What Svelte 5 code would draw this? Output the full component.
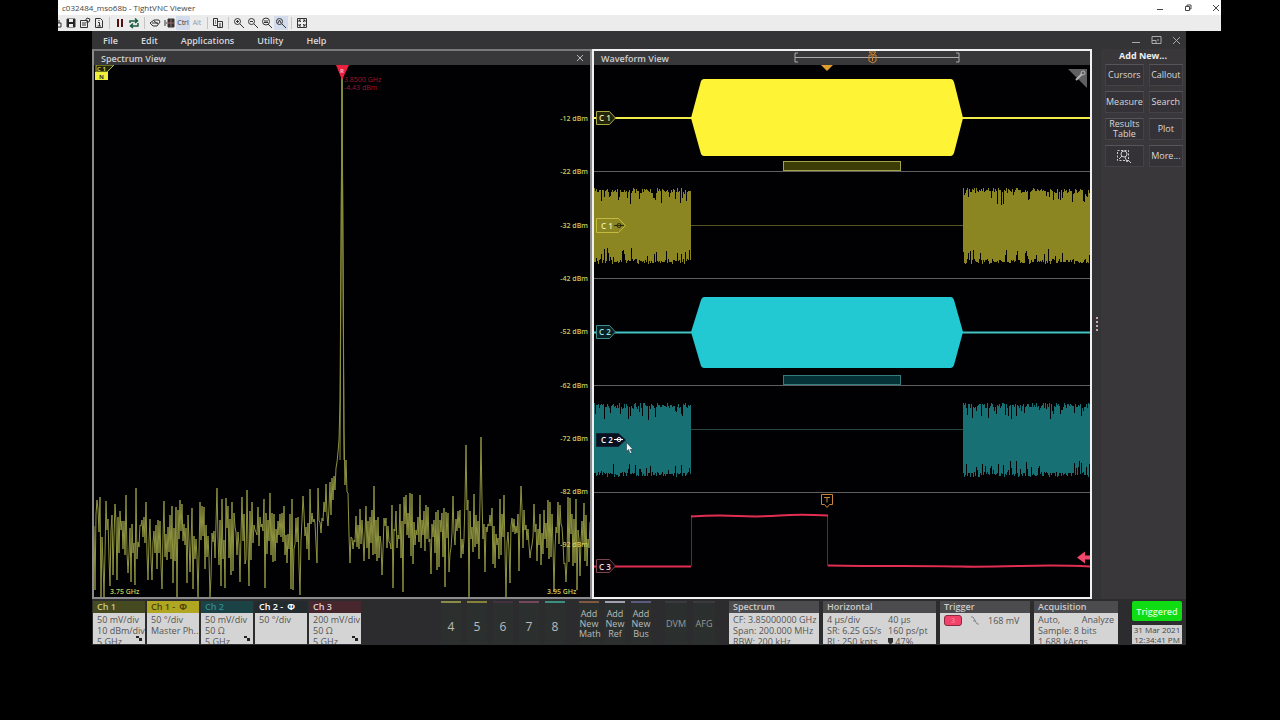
<svelte:options runes={true} />

<script>
  const menus = ["File", "Edit", "Applications", "Utility", "Help"];

  const channels = [
    { name: "Ch 1", kind: "ch1", lines: ["50 mV/div", "10 dBm/div", "5 GHz"], probe: true },
    { name: "Ch 1 -", phase: true, kind: "ch1p", lines: ["50 °/div", "Master Ph..."] },
    { name: "Ch 2", kind: "ch2", lines: ["50 mV/div", "50 Ω", "5 GHz"], probe: true },
    { name: "Ch 2 -", phase: true, kind: "ch2p", lines: ["50 °/div"] },
    { name: "Ch 3", kind: "ch3", lines: ["200 mV/div", "50 Ω", "5 GHz"], probe: true },
  ];

  const inactive = [
    { n: 4, kind: "olive" },
    { n: 5, kind: "gold" },
    { n: 6, kind: "plum" },
    { n: 7, kind: "rose" },
    { n: 8, kind: "teal" },
  ];

  const addNew = [
    { label: "Math", kind: "brown" },
    { label: "Ref", kind: "silver" },
    { label: "Bus", kind: "violet" },
  ];

  const levels = [-12, -22, -32, -42, -52, -62, -72, -82, -92];

  // small seeded generator, so the noise looks the same on every load
  function noise(seed) {
    let s = seed;
    return () => {
      s = (s * 16807) % 2147483647;
      return s / 2147483647;
    };
  }

  const spurs = {
    95: 590, 97: 500, 101: 597, 104: 597, 110: 586, 117: 580, 136: 488, 135: 585, 115: 504, 128: 573,
    148: 580, 152: 580, 162: 589, 164: 501, 177: 597, 180: 500, 190: 572, 193: 589, 198: 597,
    202: 506, 210: 597, 217: 488, 221: 586, 225: 588, 226: 498, 240: 582, 247: 490, 249: 586,
    265: 588, 270: 493, 291: 589, 292: 499, 293: 590, 300: 595, 303: 496, 310: 489, 350: 563,
    374: 486, 382: 575, 393: 588, 403: 592, 404: 497, 412: 494, 431: 574, 445: 587, 453: 496,
    465: 500, 466: 445, 467: 510, 469: 597, 480: 500, 481: 437, 482: 500, 495: 568, 506: 597,
    510: 583, 519: 571, 521: 486, 548: 500, 554: 592, 566: 582, 570: 498, 580: 576, 587: 566,
  };

  // skirt of the carrier
  const skirt = {
    326: 484, 328: 526, 330: 482, 331: 515, 332: 478, 333: 500, 334: 476, 335: 490, 336: 468,
    337: 462, 338: 452, 339: 440, 340: 400, 341: 250, 342: 76, 343: 250, 344: 430, 345: 485,
    346: 460, 347: 492, 348: 493, 349: 535,
  };

  function spectrumTrace() {
    const rnd = noise(7331);
    const pts = [];
    for (let x = 94; x <= 590; x++) {
      let mid = 533;
      if (x > 290 && x < 341) mid = 533 - ((x - 290) * (x - 290)) / 48;
      const amp = x > 318 && x < 350 ? 36 : 52;
      let y = mid + (x % 2 ? 1 : -1) * rnd() * amp * 0.55 + (rnd() - 0.5) * 26;
      if (rnd() > 0.94) y += 24;
      if (spurs[x]) y = spurs[x];
      if (skirt[x]) y = skirt[x];
      pts.push(`${x},${Math.round(y)}`);
    }
    return pts.join(" ");
  }

  function burst(x0, x1, top, bottom, seed) {
    const rnd = noise(seed);
    const up = [];
    const down = [];
    for (let x = x0; x <= x1; x++) {
      let a = rnd() * 5;
      let b = rnd() * 5;
      if (rnd() > 0.8) a += rnd() * 12;
      if (rnd() > 0.8) b += rnd() * 12;
      if (rnd() > 0.98) a += 12;
      if (rnd() > 0.98) b += 12;
      up.push(`${x},${Math.round(top + a)} ${x + 1},${Math.round(top + a)}`);
      down.unshift(`${x + 1},${Math.round(bottom - b)} ${x},${Math.round(bottom - b)}`);
    }
    return up.concat(down).join(" ");
  }

  const spectrum = spectrumTrace();
  const bursts = [
    { kind: "c1p", points: burst(594, 690, 188, 264, 11) },
    { kind: "c1p", points: burst(963, 1089, 188, 264, 523) },
    { kind: "c2p", points: burst(594, 690, 403, 477, 97) },
    { kind: "c2p", points: burst(963, 1089, 403, 477, 881) },
  ];
</script>

<div class="viewer">
  <header class="titlebar">
    <span class="titlebar__name">c032484_mso68b - TightVNC Viewer</span>
    <div class="titlebar__buttons">
      <button aria-label="Minimize window"><svg viewBox="0 0 10 10"><path d="M2 6.500h6" /></svg></button>
      <button aria-label="Restore window"><svg viewBox="0 0 10 10"><path d="M2.500 3.500h4v4h-4zM4 3.500V2h4v4H6.500" /></svg></button>
      <button aria-label="Close window"><svg viewBox="0 0 10 10"><path d="M2 2l6 6M8 2l-6 6" /></svg></button>
    </div>
  </header>

  <div class="toolbar">
    <button class="tool tool--cut" aria-label="New connection"><svg viewBox="0 0 12 12"><path d="M8 3v3M5 6h5v4H5z" /></svg></button>
    <button class="tool" aria-label="Save session"><svg viewBox="0 0 12 12"><path d="M2 2h8v8H2z" fill="#222" /><path d="M4 2h4v3H4zM4 7h4v3H4z" fill="#eee" stroke="none" /></svg></button>
    <button class="tool" aria-label="Connection options"><svg viewBox="0 0 12 12"><path d="M1.500 3.500h7v7h-7zM3 6h4M3 8h4M6 4l2-3 3 1-1 3H7" /></svg></button>
    <button class="tool" aria-label="Connection info"><svg viewBox="0 0 12 12"><path d="M2.500 1.500h5l2 2v7h-7zM6 3v1M5 5.500h1.500V9M4.500 9h3.500" /></svg></button>
    <i></i>
    <button class="tool" aria-label="Pause"><svg viewBox="0 0 12 12"><path d="M4 2v8M8 2v8" stroke="#511" stroke-width="2" /></svg></button>
    <button class="tool" aria-label="Refresh"><svg viewBox="0 0 12 12"><path d="M2 6V4h7M7 1.500L9.500 4 7 6M10 6v3H3M5 6.500L2.500 9 5 11" stroke="#175c40" stroke-width="1.500" /></svg></button>
    <i></i>
    <button class="tool" aria-label="Ctrl Alt Del"><svg viewBox="0 0 12 12"><path d="M1 6l4-3h5l1 2-3 4H4zM3 6h6M5 4l4 3" /></svg></button>
    <button class="tool" aria-label="Ctrl Esc"><svg viewBox="0 0 12 12"><path d="M5 2h6v8H5z" fill="#333" /><path d="M8 2v8M5 6h6" stroke="#966" /><path d="M1 4h2M1 6h3M1 8h2" /></svg></button>
    <button class="tool tool--key tool--on">Ctrl</button>
    <button class="tool tool--key tool--off">Alt</button>
    <i></i>
    <button class="tool" aria-label="Transfer files"><svg viewBox="0 0 12 12"><path d="M1.500 1.500h4v7h-4zM5.500 4.500h5v6h-5zM3 4h1M3 6h1M7 7h2M7 9h2" /></svg></button>
    <i></i>
    <button class="tool" aria-label="Zoom in"><svg viewBox="0 0 12 12"><circle cx="4.500" cy="4.500" r="3" /><path d="M7 7l4 4M3 4.500h3M4.500 3v3" /></svg></button>
    <button class="tool" aria-label="Zoom out"><svg viewBox="0 0 12 12"><circle cx="4.500" cy="4.500" r="3" /><path d="M7 7l4 4M3 4.500h3" /></svg></button>
    <button class="tool" aria-label="Zoom 100%"><svg viewBox="0 0 12 12"><circle cx="5" cy="4.500" r="3.500" /><path d="M7 7l4 4M3 4h4M3 5.500h4" /></svg></button>
    <button class="tool tool--on" aria-label="Zoom auto"><svg viewBox="0 0 12 12"><circle cx="4.500" cy="4.500" r="3" /><path d="M7 7l4 4M3 6l1.500-3L6 6" /></svg></button>
    <i></i>
    <button class="tool" aria-label="Full screen"><svg viewBox="0 0 12 12"><path d="M1.500 1.500h9v9h-9zM3 3l2 2M9 3L7 5M3 9l2-2M9 9L7 7M3 5V3h2M7 3h2v2M3 7v2h2M7 9h2V7" /></svg></button>
  </div>

  <div class="scope">
    <nav class="menu">
      {#each menus as item}
        <button>{item}</button>
      {/each}
      <div class="menu__window">
        <button aria-label="Minimize"><svg viewBox="0 0 12 12"><path d="M2 8.500h8" /></svg></button>
        <button aria-label="Resize"><svg viewBox="0 0 12 12"><path d="M2 2.500h9v7H2zM2 6.500h4v3M7 6h2" /></svg></button>
        <button aria-label="Close"><svg viewBox="0 0 12 12"><path d="M3 3l7 7M10 3l-7 7" /></svg></button>
      </div>
    </nav>

    <div class="main">
      <section class="view">
        <h2 class="view__head">
          Spectrum View
          <button class="view__close" aria-label="Close Spectrum View"><svg viewBox="0 0 10 10"><path d="M2 2l6 6M8 2l-6 6" /></svg></button>
        </h2>
        <svg class="plot" viewBox="94 65 496 532">
          <polyline class="trace" points={spectrum} />
          <path class="carrier" d="M340 460L342 78L344 460" />
          <g class="axis">
            {#each levels as level, i}
              <text x="588" y={121 + Math.round(i * 53.300)} text-anchor="end">{level} dBm</text>
            {/each}
            <text x="110" y="594">3.75 GHz</text>
            <text x="547" y="594">3.95 GHz</text>
          </g>
          <path d="M96 65h18l-7 7h-11z" fill="#22240a" stroke="#b5b838" />
          <text class="tiny" x="97" y="71" fill="#c9cc50">C 1</text>
          <rect x="95" y="72" width="13" height="8" fill="#eef03c" />
          <text class="tiny" x="99" y="79" fill="#333">N</text>
          <path d="M336 65h13l-7 15z" fill="#e8223f" />
          <text class="tiny" x="340" y="73" fill="#ffb0b8">R</text>
          <g class="readout">
            <text x="344" y="82">3.8500 GHz</text>
            <text x="344" y="90">-4.43 dBm</text>
          </g>
        </svg>
      </section>

      <section class="view view--active">
        <h2 class="view__head">
          Waveform View
          <svg class="pan" viewBox="0 0 166 14">
            <path d="M4 2H1v9h3M162 2h3v9h-3M1 6.500h164" />
            <path class="pan__mark" d="M75 1h7l-3 3zM75 4h7v6l-3 2-4-2zM77 6h3M78.500 6v4" />
          </svg>
        </h2>
        <svg class="plot" viewBox="594 65 496 532">
          <g class="divider">
            <path d="M594 171.500h496M594 278.500h496M594 385.500h496M594 492.500h496" />
          </g>

          <path d="M594 118H1090" stroke="#f0ec4a" stroke-width="2" />
          <path d="M691 118L701 81Q702 79 704 79H951Q953 79 954 82L963 118L954 153Q953 156 951 156H704Q702 156 701 154Z" fill="#fff335" />
          <rect x="783.500" y="161.500" width="117" height="9" fill="#3c3c06" stroke="#a3a344" />

          <path d="M691 225.500H963" stroke="#55531f" />
          <path d="M691 429.500H963" stroke="#264643" />
          {#each bursts as b}
            <polygon class={b.kind} points={b.points} />
          {/each}

          <path d="M594 332.500H1090" stroke="#43c4c2" stroke-width="2" />
          <path d="M691 332L701 300Q702 297 704 297H951Q953 297 954 300L963 332L954 365Q953 368 951 368H704Q702 368 701 366Z" fill="#22c8d2" />
          <rect x="783.500" y="375.500" width="117" height="9" fill="#053236" stroke="#357c7e" />

          <path d="M691.500 515V566M827.500 515V566" stroke="#4c3438" />
          <path d="M594 566.500H691M691 516.500Q715 515 738 516T780 515.500T828 515.500M828 565.500Q860 566 900 566T960 566.500T1020 566T1090 566.500" fill="none" stroke="#e22e52" stroke-width="2" />

          <g class="tag">
            <path d="M596.500 111.500h13l6 6.500l-6 6.500h-13z" fill="#24240a" stroke="#a9a83c" />
            <text x="599" y="121" fill="#eeeaa8">C 1</text>
            <path d="M596.500 218.500h22l7 7l-7 7h-22z" fill="#8b8522" stroke="#c3bb40" />
            <text x="601" y="229" fill="#eeeaa8">C 1</text>
            <path d="M596.500 325.500h13l6 6.500l-6 6.500h-13z" fill="#062024" stroke="#3c8c90" />
            <text x="599" y="335" fill="#9fe0e0">C 2</text>
            <path d="M596.500 433.500h22l7 6.500l-7 6.500h-22z" fill="#08101f" stroke="#123" />
            <text x="601" y="443" fill="#fff">C 2</text>
            <path d="M596.500 559.500h13l6 6.500l-6 6.500h-13z" fill="#12060a" stroke="#7a4450" />
            <text x="599" y="570" fill="#f6dbe0">C 3</text>
          </g>
          <g fill="none" stroke="#2b2a08">
            <circle cx="619" cy="225.500" r="2" /><path d="M614 225.500h10" />
          </g>
          <g fill="none" stroke="#fff">
            <circle cx="619" cy="439.500" r="2" /><path d="M614 439.500h9" />
          </g>

          <path d="M821 65h12l-6 6z" fill="#dd9c2c" />
          <g fill="none" stroke="#c9863a">
            <path d="M821.500 494.500h11v10h-3l-2.500 3l-2.500-3h-3zM824 497.500h6M827 497.500v5" />
          </g>
          <path d="M1077 557.500l8-6v4h5v4h-5v4z" fill="#f0476a" />
          <path d="M1068 69h19v19z" fill="#5f5f62" />
          <path d="M1076 80l6-6" stroke="#b5b5b8" stroke-width="2" />
          <circle cx="1083" cy="73" r="2" fill="none" stroke="#b5b5b8" />
          <path d="M626.500 442.500v9l2-2l1.500 4l2-1l-2-3h3z" fill="#e9fbff" stroke="#123" stroke-width="0.500" />
        </svg>
      </section>

      <aside class="side">
        <span class="side__grip"><b></b><b></b><b></b><b></b></span>
        <div class="side__panel">
          <h3>Add New...</h3>
          <div class="side__grid">
            <button>Cursors</button>
            <button>Callout</button>
            <button>Measure</button>
            <button>Search</button>
            <button>Results Table</button>
            <button>Plot</button>
            <button aria-label="Draw a box"><svg viewBox="0 0 16 16"><path d="M1.500 2.500h11v10h-11z" stroke-dasharray="2 1.500" /><circle cx="8" cy="6" r="3" /><path d="M6 8l-3 3M9 9l2 5 1-2 3 3" /></svg></button>
            <button>More...</button>
          </div>
        </div>
      </aside>
    </div>

    <footer class="settings">
      <div class="group group--channels">
        {#each channels as ch}
          <button class="badge badge--{ch.kind}">
            <span class="badge__head">{ch.name}{#if ch.phase}<em>Φ</em>{/if}</span>
            <span class="badge__body">
              {#each ch.lines as line}
                <span>{line}</span>
              {/each}
            </span>
            {#if ch.probe}
              <svg class="badge__probe" viewBox="0 0 8 7"><path d="M1 1h3v2H1zM4 3h3v3H4z" fill="#222" /></svg>
            {/if}
          </button>
        {/each}
      </div>

      <div class="group">
        {#each inactive as ch}
          <button class="slot slot--{ch.kind}">{ch.n}</button>
        {/each}
      </div>
      <div class="group">
        {#each addNew as a}
          <button class="slot slot--text slot--{a.kind}">Add New {a.label}</button>
        {/each}
      </div>
      <div class="group">
        <button class="slot slot--text slot--off">DVM</button>
        <button class="slot slot--text slot--off">AFG</button>
      </div>

      <div class="group group--panels">
        <button class="badge badge--spectrum">
          <span class="badge__head">Spectrum</span>
          <span class="badge__body">
            <span>CF: 3.85000000 GHz</span>
            <span>Span: 200.000 MHz</span>
            <span>RBW: 200 kHz</span>
          </span>
        </button>
        <button class="badge badge--horizontal">
          <span class="badge__head">Horizontal</span>
          <span class="badge__body badge__body--two">
            <span>4 µs/div</span><span>40 µs</span>
            <span>SR: 6.25 GS/s</span><span>160 ps/pt</span>
            <span>RL: 250 kpts</span><span><svg class="pin" viewBox="0 0 5 7"><path d="M0 0h5v4L2.500 7L0 4z" fill="#333" /></svg> 47%</span>
          </span>
        </button>
        <button class="badge badge--trigger">
          <span class="badge__head">Trigger</span>
          <span class="badge__body badge__body--trigger">
            <span class="source">3</span>
            <svg class="edge" viewBox="0 0 10 9"><path d="M1 1h2l4 7h2M3 5h3" /></svg>
            <span>168 mV</span>
          </span>
        </button>
        <button class="badge badge--acquisition">
          <span class="badge__head">Acquisition</span>
          <span class="badge__body">
            <span class="spread"><span>Auto,</span><span>Analyze</span></span>
            <span>Sample: 8 bits</span>
            <span>1.688 kAcqs</span>
          </span>
        </button>
      </div>

      <div class="status">
        <button class="status__run">Triggered</button>
        <div class="status__clock"><span>31 Mar 2021</span><span>12:34:41 PM</span></div>
      </div>
    </footer>
  </div>
</div>

<style>
  :global(body) {
    background: #000;
  }
  button {
    margin: 0;
    padding: 0;
    border: 0;
    background: none;
    color: inherit;
    font: inherit;
  }
  svg {
    display: block;
  }
  .viewer {
    margin: 0 59px 0 58px;
    font-family: "Open Sans", "Noto Sans", sans-serif;
    font-size: 9px;
    line-height: 11px;
  }
  .titlebar {
    display: flex;
    align-items: center;
    justify-content: space-between;
    height: 15px;
    padding-left: 4px;
    background: #fff;
    color: #444;
    font-size: 8px;
  }
  .titlebar__buttons {
    display: flex;
    gap: 18px;
  }
  .titlebar__buttons svg {
    width: 10px;
    height: 10px;
    fill: none;
    stroke: #444;
  }
  .toolbar {
    display: flex;
    align-items: center;
    height: 16px;
    background: #ececec;
    overflow: hidden;
  }
  .toolbar i {
    width: 1px;
    height: 12px;
    margin: 0 3px;
    background: #c4c4c4;
  }
  .tool {
    flex: none;
    width: 14px;
    height: 14px;
    padding: 1px;
    color: #333;
    font-size: 8px;
    line-height: 12px;
  }
  .tool svg {
    width: 12px;
    height: 12px;
    fill: none;
    stroke: #333;
  }
  .tool--cut {
    margin-left: -8px;
  }
  .tool--key {
    font-size: 7px;
  }
  .tool--on {
    background: #d3dcec;
  }
  .tool--off {
    color: #999;
  }

  .scope {
    margin: 0 35px 0 34px;
    background: #343336;
    color: #d8d8d8;
  }
  .menu {
    display: flex;
    align-items: center;
    gap: 23px;
    height: 18px;
    padding-left: 11px;
    font-weight: 600;
  }
  .menu__window {
    display: flex;
    gap: 8px;
    margin-left: auto;
    padding-right: 4px;
  }
  .menu__window svg {
    width: 12px;
    height: 12px;
    fill: none;
    stroke: #aaa;
  }
  .main {
    display: flex;
    align-items: stretch;
  }
  .view {
    flex: 1;
    min-width: 0;
    border: 2px solid #8b8b8d;
    border-top-color: #7a7a7c;
    background: #000;
  }
  .view--active {
    border-color: #f1f1f1;
  }
  .view__head {
    display: flex;
    align-items: center;
    height: 14px;
    margin: 0;
    padding: 0 5px 0 7px;
    background: #38373a;
    color: #cfcfcf;
    font-size: 9px;
    font-weight: 600;
  }
  .view__close {
    margin-left: auto;
  }
  .view__close svg {
    width: 10px;
    height: 10px;
    stroke: #bbb;
  }
  .pan {
    width: 166px;
    height: 14px;
    margin: 0 auto;
    fill: none;
    stroke: #aaa;
  }
  .pan__mark {
    stroke: #d0862c;
  }
  .plot {
    width: 100%;
    height: auto;
    background: #010002;
  }
  .trace {
    fill: none;
    stroke: #8f9440;
    stroke-width: 1;
  }
  .carrier {
    fill: none;
    stroke: #8c9038;
  }
  .axis {
    fill: #c9c95c;
    font-size: 7px;
    font-weight: 600;
  }
  .tiny {
    font-size: 6px;
    font-weight: 700;
  }
  .readout {
    fill: #a3142a;
    font-size: 7px;
  }
  .divider {
    stroke: #5e5e60;
  }
  .c1p {
    fill: #8b8522;
  }
  .c2p {
    fill: #177074;
  }
  .tag {
    font-size: 8px;
    font-weight: 600;
  }

  .side {
    display: flex;
    width: 94px;
    background: #343336;
  }
  .side__grip {
    display: flex;
    flex-direction: column;
    align-items: center;
    justify-content: center;
    gap: 2px;
    width: 9px;
  }
  .side__grip b {
    width: 2px;
    height: 2px;
    background: #c9a5a8;
  }
  .side__panel {
    flex: 1;
    padding-right: 1px;
    background: #39373a;
  }
  .side h3 {
    margin: 0;
    padding: 1px 0 3px;
    color: #eee;
    font-size: 9px;
    font-weight: 700;
    text-align: center;
  }
  .side__grid {
    display: grid;
    grid-template-columns: 1fr 1fr;
    gap: 5px;
    padding: 0 2px 0 4px;
  }
  .side__grid button {
    display: flex;
    align-items: center;
    justify-content: center;
    height: 22px;
    border: 1px solid #444245;
    border-top-color: #57555a;
    background: #343236;
    color: #d8d8d8;
    font-size: 9px;
    line-height: 10px;
    text-align: center;
  }
  .side__grid svg {
    width: 16px;
    height: 16px;
    fill: none;
    stroke: #ccc;
  }

  .settings {
    display: flex;
    gap: 14px;
    height: 46px;
    padding: 2px 4px 1px 1px;
    box-sizing: border-box;
    background: #2c2b2e;
    overflow: hidden;
  }
  .group {
    display: flex;
    gap: 6px;
  }
  .group--channels {
    gap: 2px;
    margin-right: auto;
  }
  .group--panels {
    gap: 4px;
  }
  .badge {
    position: relative;
    display: flex;
    flex-direction: column;
    width: 52px;
    height: 43px;
    overflow: hidden;
    background: #d4d4d4;
    color: #555;
    text-align: left;
    white-space: nowrap;
  }
  .badge__head {
    flex: none;
    width: 100%;
    height: 12px;
    padding-left: 4px;
    box-sizing: border-box;
    background: #4c4b4e;
    color: #ccc;
    font-weight: 600;
    line-height: 12px;
  }
  .badge__head em {
    margin-left: 4px;
    font-style: normal;
    font-weight: 700;
  }
  .badge__body {
    display: flex;
    flex-direction: column;
    width: 100%;
    padding: 1px 4px 0;
    box-sizing: border-box;
    font-size: 9px;
  }
  .badge__probe {
    position: absolute;
    right: 2px;
    bottom: 2px;
    width: 8px;
    height: 7px;
  }
  .badge--ch1 .badge__head {
    background: #454a20;
    color: #c9cc80;
  }
  .badge--ch1p .badge__head {
    background: #b1a622;
    color: #4a4408;
  }
  .badge--ch2 .badge__head {
    background: #1b4245;
    color: #328a90;
  }
  .badge--ch2p .badge__head {
    background: #232b2f;
    color: #fff;
  }
  .badge--ch3 .badge__head {
    background: #47262e;
    color: #e0d0d4;
  }
  .badge--spectrum,
  .badge--trigger {
    width: 90px;
  }
  .badge--horizontal {
    width: 113px;
  }
  .badge--acquisition {
    width: 84px;
  }
  .badge__body--two {
    display: grid;
    grid-template-columns: 61px 1fr;
  }
  .badge__body--trigger {
    flex-direction: row;
    align-items: center;
    gap: 8px;
    padding-top: 2px;
  }
  .source {
    width: 16px;
    height: 9px;
    border: 1px solid #8a2840;
    border-radius: 3px;
    background: #f2416a;
    color: #ff9db4;
    font-size: 7px;
    line-height: 9px;
    text-align: center;
  }
  .edge {
    width: 10px;
    height: 9px;
    fill: none;
    stroke: #888;
  }
  .pin {
    display: inline-block;
    width: 5px;
    height: 7px;
  }
  .spread {
    display: flex;
    justify-content: space-between;
  }
  .slot {
    width: 20px;
    height: 43px;
    padding-top: 6px;
    border-top: 2px solid #555;
    background: #2b302e;
    color: #bbb;
    font-size: 12px;
    line-height: 16px;
  }
  .slot--text {
    padding-top: 0;
    font-size: 9px;
    line-height: 10px;
  }
  .slot--off {
    width: 22px;
    border-top-color: #3a3a3c;
    color: #999;
  }
  .slot--olive { border-top-color: #8a8c48; }
  .slot--gold { border-top-color: #85803a; }
  .slot--plum { border-top-color: #45303f; }
  .slot--rose { border-top-color: #75475a; }
  .slot--teal { border-top-color: #3b8f80; }
  .slot--brown { border-top-color: #805a40; }
  .slot--silver { border-top-color: #a0a0b0; }
  .slot--violet { border-top-color: #5d5a80; }

  .status {
    display: flex;
    flex-direction: column;
    gap: 4px;
    width: 50px;
    white-space: nowrap;
  }
  .status__run {
    flex: none;
    height: 20px;
    border-radius: 2px;
    background: #10dc14;
    color: #d5ffd5;
    font-size: 9px;
    font-weight: 600;
  }
  .status__clock {
    display: flex;
    flex-direction: column;
    flex: none;
    align-items: center;
    height: 19px;
    overflow: hidden;
    background: #d0d0d0;
    color: #444;
    font-size: 8px;
    line-height: 10px;
  }
</style>
